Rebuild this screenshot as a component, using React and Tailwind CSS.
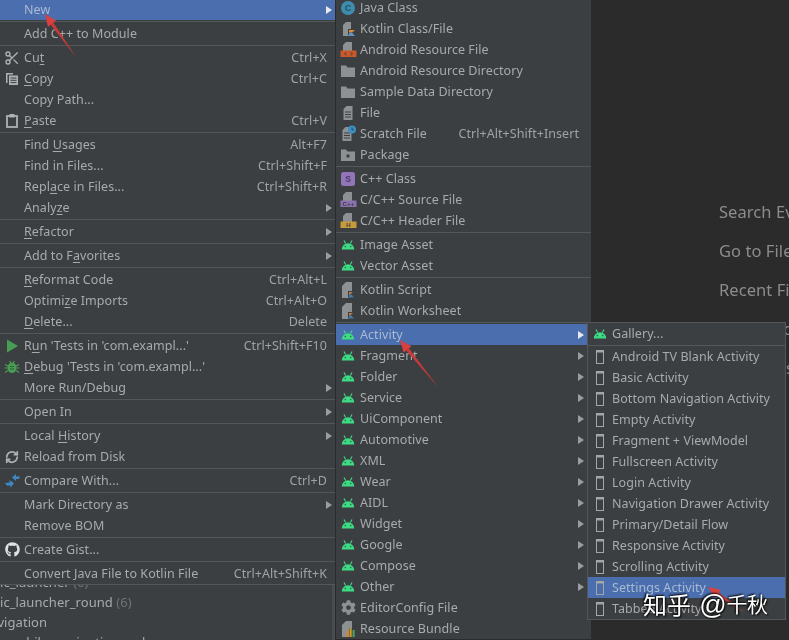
import React from "react";
import { Scissors, RefreshCw } from "lucide-react";
import { FaGithub, FaCog } from "react-icons/fa";

const G = "#afb1b3";

const Android = () => (
  <svg width="16" height="16" viewBox="0 0 16 16">
    <path d="M1.800 12.500a6.200 6.200 0 0 1 12.400 0z" fill="#3ddc84" />
    <path d="M4 3.600l1.600 3M12 3.600l-1.600 3" stroke="#3ddc84" strokeWidth="1.100" />
    <circle cx="5.300" cy="9.600" r="0.800" fill="#2f6b4c" />
    <circle cx="10.700" cy="9.600" r="0.800" fill="#2f6b4c" />
  </svg>
);
const Phone = () => (
  <svg width="16" height="16" viewBox="0 0 16 16" fill="none">
    <rect x="4.500" y="1.500" width="7" height="13" stroke="#a4a6a8" strokeWidth="1" />
    <rect x="4.500" y="1.500" width="7" height="2" fill="#a4a6a8" />
  </svg>
);
const JavaC = () => (
  <svg width="16" height="16" viewBox="0 0 16 16">
    <circle cx="8" cy="8" r="7" fill="#3f8dae" />
    <text x="8" y="11" textAnchor="middle" fontSize="9" fontFamily="Liberation Sans" fill="#1f4e63" fontWeight="700">C</text>
  </svg>
);
const KotlinFile = () => (
  <svg width="16" height="16" viewBox="0 0 16 16">
    <path d="M6 1h5v14H3V4z" fill="#8e9193" />
    <path d="M8 8h7l-3.500 3 3 3H8z" fill="#3c3f41" />
    <path d="M9 9h6l-3 2.500H9z" fill="#e08a3a" />
    <path d="M9 12l3-.5 3 3.500H9z" fill="#5c93c9" />
  </svg>
);
const KotlinScript = () => (
  <svg width="16" height="16" viewBox="0 0 16 16">
    <path d="M6 0h6v11H9v5H2V4z" fill="#8e9193" />
    <path d="M8 9h6l-3.500 3 3.500 3.500H8z" fill="#3c3f41" />
    <path d="M9 10l4 0-4 3z" fill="#c87f46" />
    <path d="M9 13.500l2-1.500 3 3.500H9z" fill="#3f7dab" />
  </svg>
);
const ResFile = () => (
  <svg width="17" height="16" viewBox="0 0 17 16">
    <path d="M6 0h6v9H3V3z" fill="#8e9193" />
    <rect x="0.500" y="8.500" width="16" height="6.500" rx="0.500" fill="#c9582a" />
    <path d="M6.500 10.300l-2 1.500 2 1.500M10.500 10.300l2 1.500-2 1.500" stroke="#3c3f41" strokeWidth="0.900" fill="none" />
  </svg>
);
const Folder = ({ dot }) => (
  <svg width="16" height="16" viewBox="0 0 16 16">
    <path d="M1 2.500h5l1.500 2H15v9.500H1z" fill="#8e9193" />
    {dot && <rect x="6.500" y="7.500" width="3" height="3" fill="#3c3f41" />}
  </svg>
);
const FileLines = () => (
  <svg width="16" height="16" viewBox="0 0 16 16">
    <path d="M6.500 1h6v14h-9V4z" fill="#8e9193" />
    <path d="M5 7h6M5 9.500h6M5 12h6" stroke="#3c3f41" strokeWidth="1" />
  </svg>
);
const Scratch = () => (
  <svg width="17" height="17" viewBox="0 0 17 17">
    <path d="M5.500 2h6v14h-9V5z" fill="#8e9193" />
    <path d="M4 8h6M4 10.500h6M4 13h6" stroke="#3c3f41" strokeWidth="1" />
    <circle cx="12" cy="4.500" r="4" fill="#3c8ec4" />
    <path d="M12 2.500v2.300h1.800" stroke="#1f3e55" strokeWidth="0.900" fill="none" />
  </svg>
);
const CppClass = () => (
  <svg width="16" height="16" viewBox="0 0 16 16">
    <rect x="1" y="1" width="14" height="14" rx="2.500" fill="#9275b8" />
    <text x="8" y="11" textAnchor="middle" fontSize="8.500" fontFamily="Liberation Sans" fontWeight="700" fill="#4b3a66">S</text>
  </svg>
);
const CppFile = ({ color, label }) => (
  <svg width="17" height="16" viewBox="0 0 17 16">
    <path d="M6 0h6v9H3V3z" fill="#8e9193" />
    <rect x="0.500" y="8.500" width="16" height="6.500" fill={color} />
    <text x="8.500" y="14.300" textAnchor="middle" fontSize="6.200" fontFamily="Liberation Sans" fontWeight="700" fill="#3c3f41">{label}</text>
  </svg>
);
const Bundle = () => (
  <svg width="16" height="16" viewBox="0 0 16 16">
    <path d="M6 0h6v7H9v9H2V4z" fill="#8e9193" />
    <rect x="6.500" y="10" width="2.200" height="6" fill="#d9822b" />
    <rect x="9.500" y="7" width="2.200" height="9" fill="#c9a227" />
    <rect x="12.500" y="9" width="2.200" height="7" fill="#4f9e5a" />
  </svg>
);
const CopyIcon = () => (
  <svg width="16" height="16" viewBox="0 0 16 16">
    <path d="M2 2h7v1.500H3.500V12H2z" fill={G} />
    <rect x="5" y="4.500" width="9" height="9.500" fill={G} />
    <path d="M6.500 7h6M6.500 9.300h6M6.500 11.600h6" stroke="#3c3f41" strokeWidth="1" />
  </svg>
);
const PasteIcon = () => (
  <svg width="16" height="16" viewBox="0 0 16 16" fill="none">
    <rect x="3" y="3" width="10" height="11" stroke={G} strokeWidth="1.800" />
    <rect x="5.500" y="1" width="5" height="3.500" fill={G} />
  </svg>
);
const RunIcon = () => (
  <svg width="16" height="16" viewBox="0 0 16 16">
    <path d="M3 1.500L14 8 3 14.500z" fill="#499c54" />
  </svg>
);
const BugIcon = () => (
  <svg width="16" height="16" viewBox="0 0 16 16">
    <ellipse cx="8" cy="8.800" rx="4.600" ry="5.200" fill="#499c54" />
    <path d="M1 5.500l3 1.500M15 5.500l-3 1.500M.5 9h3M15.500 9h-3M1 13.500l3-2M15 13.500l-3-2M5.500 2l1.500 2M10.500 2L9 4" stroke="#499c54" strokeWidth="1.200" />
    <path d="M6 7.500h4M6 10h4" stroke="#2f5a36" strokeWidth="0.900" />
  </svg>
);
const CompareIcon = () => (
  <svg width="17" height="16" viewBox="0 0 17 16">
    <path d="M1 9.500h5V7l4 4-4 4v-2.500H3z" fill="#3d88c4" transform="rotate(-8 5 11)" />
    <path d="M16 5.500h-4V3L8 6.500l4 3.500V8h3z" fill="#3d88c4" transform="translate(0 -2)" />
  </svg>
);

const u = (a, b, c) => (
  <>
    {a}
    <span className="underline underline-offset-2">{b}</span>
    {c}
  </>
);

const Arrow = ({ active }) => (
  <span
    className={
      "h-0 w-0 border-y-[4px] border-l-[6px] border-y-transparent " +
      (active ? "border-l-[#e8eaee]" : "border-l-[#9a9c9e]")
    }
  />
);

const Sep = ({ tall }) => (
  <div className={"flex items-start pt-px " + (tall ? "h-[3px]" : "h-[2px]")}>
    <div className="h-px w-full bg-[#54575a]" />
  </div>
);

function Row({ item, pad }) {
  return (
    <div
      className={
        "flex h-[21px] items-center whitespace-nowrap " +
        pad +
        (item.active ? " bg-[#4b6eaf] text-[#a9bad2]" : " text-[#a8aaac]")
      }
    >
      <span className="flex w-[24px] shrink-0 items-center justify-center">{item.icon}</span>
      <span className="flex-1 pt-[2px]">{item.label}</span>
      {item.hint && <span className="mr-[5px] pt-[2px] text-[#a0a2a4]">{item.hint}</span>}
      {item.more && <Arrow active={item.active} />}
    </div>
  );
}

function Menu({ items, pad, tall = true }) {
  return items.map((item, i) =>
    item === "-" ? <Sep key={i} tall={tall} /> : <Row key={i} item={item} pad={pad} />
  );
}

const main = [
  { label: "New", more: true, active: true },
  "-",
  { label: "Add C++ to Module" },
  "-",
  { label: u("Cu", "t"), hint: "Ctrl+X", icon: <Scissors size={16} color={G} strokeWidth={2} /> },
  { label: u("", "C", "opy"), hint: "Ctrl+C", icon: <CopyIcon /> },
  { label: "Copy Path..." },
  { label: u("", "P", "aste"), hint: "Ctrl+V", icon: <PasteIcon /> },
  "-",
  { label: u("Find ", "U", "sages"), hint: "Alt+F7" },
  { label: "Find in Files...", hint: "Ctrl+Shift+F" },
  { label: u("Repl", "a", "ce in Files..."), hint: "Ctrl+Shift+R" },
  { label: u("Analy", "z", "e"), more: true },
  "-",
  { label: u("", "R", "efactor"), more: true },
  "-",
  { label: u("Add to F", "a", "vorites"), more: true },
  "-",
  { label: u("", "R", "eformat Code"), hint: "Ctrl+Alt+L" },
  { label: u("Optimi", "z", "e Imports"), hint: "Ctrl+Alt+O" },
  { label: u("", "D", "elete..."), hint: "Delete" },
  "-",
  { label: u("R", "u", "n 'Tests in 'com.exampl...'"), hint: "Ctrl+Shift+F10", icon: <RunIcon /> },
  { label: u("", "D", "ebug 'Tests in 'com.exampl...'"), icon: <BugIcon /> },
  { label: "More Run/Debug", more: true },
  "-",
  { label: "Open In", more: true },
  "-",
  { label: u("Local ", "H", "istory"), more: true },
  { label: "Reload from Disk", icon: <RefreshCw size={14} color={G} strokeWidth={3} /> },
  "-",
  { label: "Compare With...", hint: "Ctrl+D", icon: <CompareIcon /> },
  "-",
  { label: "Mark Directory as", more: true },
  { label: "Remove BOM" },
  "-",
  { label: "Create Gist...", icon: <FaGithub size={15} color="#dfe1e3" /> },
  "-",
  { label: "Convert Java File to Kotlin File", hint: "Ctrl+Alt+Shift+K" },
];

const A = <Android />;
const second = [
  { label: "Java Class", icon: <JavaC /> },
  { label: "Kotlin Class/File", icon: <KotlinFile /> },
  { label: "Android Resource File", icon: <ResFile /> },
  { label: "Android Resource Directory", icon: <Folder /> },
  { label: "Sample Data Directory", icon: <Folder /> },
  { label: "File", icon: <FileLines /> },
  { label: "Scratch File", hint: "Ctrl+Alt+Shift+Insert", icon: <Scratch /> },
  { label: "Package", icon: <Folder dot /> },
  "-",
  { label: "C++ Class", icon: <CppClass /> },
  { label: "C/C++ Source File", icon: <CppFile color="#8a72b0" label="C++" /> },
  { label: "C/C++ Header File", icon: <CppFile color="#c79a3b" label="H" /> },
  "-",
  { label: "Image Asset", icon: A },
  { label: "Vector Asset", icon: A },
  "-",
  { label: "Kotlin Script", icon: <KotlinScript /> },
  { label: "Kotlin Worksheet", icon: <KotlinScript /> },
  "-",
  { label: "Activity", icon: A, more: true, active: true },
  { label: "Fragment", icon: A, more: true },
  { label: "Folder", icon: A, more: true },
  { label: "Service", icon: A, more: true },
  { label: "UiComponent", icon: A, more: true },
  { label: "Automotive", icon: A, more: true },
  { label: "XML", icon: A, more: true },
  { label: "Wear", icon: A, more: true },
  { label: "AIDL", icon: A, more: true },
  { label: "Widget", icon: A, more: true },
  { label: "Google", icon: A, more: true },
  { label: "Compose", icon: A, more: true },
  { label: "Other", icon: A, more: true },
  { label: "EditorConfig File", icon: <FaCog size={15} color="#8e9193" /> },
  { label: "Resource Bundle", icon: <Bundle /> },
];

const P = <Phone />;
const third = [
  { label: "Gallery...", icon: A },
  "-",
  ...[
    "Android TV Blank Activity",
    "Basic Activity",
    "Bottom Navigation Activity",
    "Empty Activity",
    "Fragment + ViewModel",
    "Fullscreen Activity",
    "Login Activity",
    "Navigation Drawer Activity",
    "Primary/Detail Flow",
    "Responsive Activity",
    "Scrolling Activity",
  ].map((label) => ({ label, icon: P })),
  { label: "Settings Activity", icon: P, active: true },
  { label: "Tabbed Activity", icon: P },
];

const RedArrow = ({ x1, y1, x2, y2 }) => {
  const dx = x2 - x1;
  const dy = y2 - y1;
  const len = Math.hypot(dx, dy);
  const ux = dx / len;
  const uy = dy / len;
  const bx = x2 - ux * 12;
  const by = y2 - uy * 12;
  const nx = -uy;
  const ny = ux;
  return (
    <>
      <polygon
        points={`${x1},${y1} ${bx + nx * 1.8},${by + ny * 1.8} ${bx - nx * 1.8},${by - ny * 1.8}`}
        fill="#c63a3a"
      />
      <polygon
        points={`${x2},${y2} ${bx + nx * 5},${by + ny * 5} ${bx - nx * 5},${by - ny * 5}`}
        fill="#d9403f"
      />
    </>
  );
};

export default function App() {
  return (
    <div className="relative flex h-[640px] w-[789px] overflow-hidden bg-[#2b2b2b] font-['Noto_Sans','Noto_Sans_CJK_SC',sans-serif] text-[12.500px] tracking-[0.06px] blur-[0.3px]">
      {/* project tree, seen below the menu */}
      <div className="flex w-[335px] shrink-0 flex-col justify-end overflow-hidden border-r-[3px] border-[#494c4e] bg-[#3c3f41] text-[13px] text-[#a8aaac]">
        <div className="-mb-[12px] flex flex-col">
          <div className="h-[20px] leading-[20px] whitespace-nowrap">ic_launcher <span className="text-[#707274]">(6)</span></div>
          <div className="h-[20px] leading-[20px] whitespace-nowrap">ic_launcher_round <span className="text-[#707274]">(6)</span></div>
          <div className="-ml-[18px] h-[20px] leading-[20px] whitespace-nowrap">navigation</div>
          <div className="h-[20px] pl-[6px] leading-[20px] whitespace-nowrap">mobile_navigation.xml</div>
        </div>
      </div>
      <div className="w-px shrink-0 bg-[#2b2b2b]" />

      {/* editor placeholder */}
      <div className="flex flex-1 flex-col items-start gap-[17px] overflow-hidden pl-[383px] pt-[201px] text-[16.500px] leading-[22px] whitespace-nowrap text-[#8c8c8c]">
        <div>Search Everywhere</div>
        <div>Go to File</div>
        <div>Recent Files</div>
        <div>Navigation Bar</div>
        <div>Drop files here</div>
      </div>

      {/* context menu */}
      <div className="absolute -top-px left-0 w-[335px] border-b border-[#54575a] bg-[#3c3f41]">
        <Menu items={main} pad="pr-[3px]" />
      </div>

      {/* New submenu */}
      <div className="absolute -top-[3px] left-[336px] w-[255px] bg-[#3c3f41]">
        <Menu items={second} pad="pr-[7px]" />
      </div>

      {/* Activity submenu */}
      <div className="absolute top-[322px] left-[587px] w-[199px] border border-[#54575a] bg-[#3c3f41]">
        <Menu items={third} pad="pr-[7px]" tall={false} />
      </div>

      {/* annotations */}
      <svg className="pointer-events-none absolute top-0 left-0" width="789" height="640">
        <RedArrow x1={76} y1={57} x2={45} y2={14} />
        <RedArrow x1={438} y1={387} x2={400} y2={340} />
        <RedArrow x1={745} y1={613} x2={708} y2={587} />
      </svg>
      <div className="absolute top-[589px] left-[643px] flex h-[32px] items-center whitespace-nowrap text-white [text-shadow:1px_1px_2px_#000,-1px_-1px_2px_#000]">
        <span className="text-[24px]">知乎</span>
        <span className="ml-[8px] font-['Liberation_Sans',sans-serif] text-[27px]">@</span>
        <span className="text-[21px] tracking-[-0.5px]">千秋</span>
      </div>
    </div>
  );
}
